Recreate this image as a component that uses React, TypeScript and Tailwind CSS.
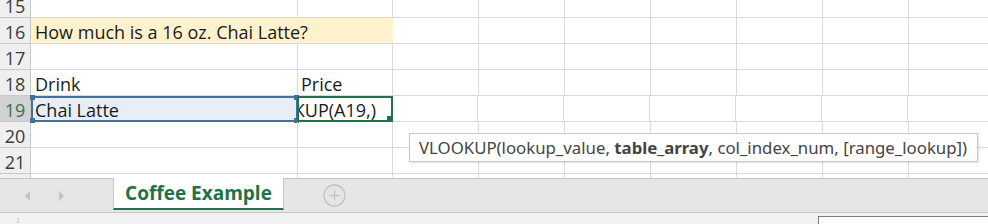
import React from "react";

const cols = [267, 95, 86, 86, 86, 86, 86, 86, 86, 86];
const cellFont = { fontFamily: "'Open Sans', sans-serif" };

function Row({ n, children, header = "normal", h = 26 }: { n: number; children?: React.ReactNode; header?: "normal" | "sel"; h?: number }) {
  return (
    <div className="flex shrink-0" style={{ height: h }}>
      <div
        className={`w-[31px] shrink-0 border-r border-b border-[#c8c8c8] flex items-center justify-center pt-[4px] text-[18px] ${
          header === "sel" ? "bg-[#d2d2d2] text-[#3c6e51]" : "bg-[#efefef] text-[#3b3b3b]"
        }`}
        style={cellFont}
      >
        {n}
      </div>
      <div className="relative flex flex-1">{children}</div>
    </div>
  );
}

function Cells() {
  return (
    <>
      {cols.map((w, i) => (
        <div key={i} className="shrink-0 border-r border-b border-[#dadada]" style={{ width: w }} />
      ))}
    </>
  );
}

export default function App() {
  return (
    <div className="w-[988px] h-[224px] bg-white overflow-hidden relative text-[#1a1a1a]" style={cellFont}>
      <div className="h-[178px] overflow-hidden">
        <div className="mt-[-8px] flex flex-col">
          <Row n={15}>
            <Cells />
          </Row>
          <Row n={16}>
            <div className="shrink-0 w-[362px] bg-[#fff2cc] border-b border-[#dadada] flex items-center pl-[4px] pt-[4px] text-[18px] whitespace-nowrap">
              How much is a 16 oz. Chai Latte?
            </div>
            {cols.slice(2).map((w, i) => (
              <div key={i} className="shrink-0 border-r border-b border-[#dadada]" style={{ width: w }} />
            ))}
          </Row>
          <Row n={17}>
            <Cells />
          </Row>
          <Row n={18}>
            <div className="shrink-0 w-[267px] border-r border-b border-[#dadada] flex items-center pl-[4px] pt-[4px] text-[18px]">Drink</div>
            <div className="shrink-0 w-[95px] border-r border-b border-[#dadada] flex items-center pl-[3px] pt-[4px] text-[18px]">Price</div>
            {cols.slice(2).map((w, i) => (
              <div key={i} className="shrink-0 border-r border-b border-[#dadada]" style={{ width: w }} />
            ))}
          </Row>
          <Row n={19} header="sel">
            <div className="shrink-0 w-[267px] bg-[#e8eef7] border-2 border-[#41719c] flex items-center pl-[2px] pt-[3px] text-[18px] relative">
              Chai Latte
              <span className="absolute -left-[3px] -top-[3px] w-[5px] h-[5px] bg-[#41719c]" />
              <span className="absolute -left-[3px] -bottom-[3px] w-[5px] h-[5px] bg-[#41719c]" />
              <span className="absolute -right-[3px] -top-[3px] w-[5px] h-[5px] bg-[#41719c]" />
              <span className="absolute -right-[3px] -bottom-[3px] w-[5px] h-[5px] bg-[#41719c]" />
            </div>
            <div className="shrink-0 w-[96px] -ml-[1px] border-2 border-[#217346] flex items-center justify-end pr-[15px] pt-[3px] text-[18px] overflow-hidden whitespace-nowrap relative">
              <span>=VLOOKUP(A19,)</span>
              <span className="absolute -right-[1px] -bottom-[1px] w-[6px] h-[6px] bg-[#217346] border border-white" />
            </div>
            {cols.slice(2).map((w, i) => (
              <div key={i} className="shrink-0 border-r border-b border-[#dadada]" style={{ width: i === 0 ? w - 1 : w }} />
            ))}
          </Row>
          <Row n={20}>
            <Cells />
          </Row>
          <Row n={21}>
            <Cells />
          </Row>
          <Row n={22}>
            <Cells />
          </Row>
        </div>
      </div>

      {/* tooltip */}
      <div
        className="absolute left-[409px] top-[133px] h-[29px] w-[569px] pl-[9px] bg-white border border-[#c6c6c6] shadow-[1px_1px_2px_rgba(0,0,0,0.12)] flex items-center text-[16.8px] text-[#444] whitespace-nowrap"
        style={{ fontFamily: "'Noto Sans', sans-serif" }}
      >
        VLOOKUP(lookup_value,&nbsp;<b className="font-bold">table_array</b>, col_index_num, [range_lookup])
      </div>

      {/* sheet tab bar */}
      <div className="h-[35px] bg-[#e6e6e6] border-t border-b border-[#c6c6c6] flex items-stretch">
        <div className="w-[113px] shrink-0 flex items-center">
          <svg width="8" height="10" viewBox="0 0 8 10" className="ml-[24px]">
            <path d="M6 0 L1 5 L6 10 Z" fill="#c3c3c3" />
          </svg>
          <svg width="8" height="10" viewBox="0 0 8 10" className="ml-[25px]">
            <path d="M2 0 L7 5 L2 10 Z" fill="#c3c3c3" />
          </svg>
        </div>
        <div className="w-[171px] shrink-0 bg-white -mt-[1px] mb-[2px] border-l border-r border-[#c6c6c6] border-b-[2px] border-b-[#217346] flex items-center justify-center text-[19px] font-bold text-[#217346]">
          Coffee Example
        </div>
        <div className="flex items-center ml-[39px]">
          <svg width="23" height="23" viewBox="0 0 23 23">
            <circle cx="11.5" cy="11.5" r="10.5" fill="none" stroke="#c2c2c2" strokeWidth="1.3" />
            <path d="M11.5 6.5 V16.5 M6.5 11.5 H16.5" stroke="#c2c2c2" strokeWidth="1.3" />
          </svg>
        </div>
      </div>

      {/* status bar */}
      <div className="h-[11px] bg-[#f1f1f1] relative">
        <span className="absolute left-[17px] top-[3px] text-[8px] leading-none text-[#999]">⁞</span>
        <div className="absolute left-[818px] top-[3px] w-[175px] h-[12px] bg-white border-t border-l border-[#7a7a7a]" />
      </div>
    </div>
  );
}
